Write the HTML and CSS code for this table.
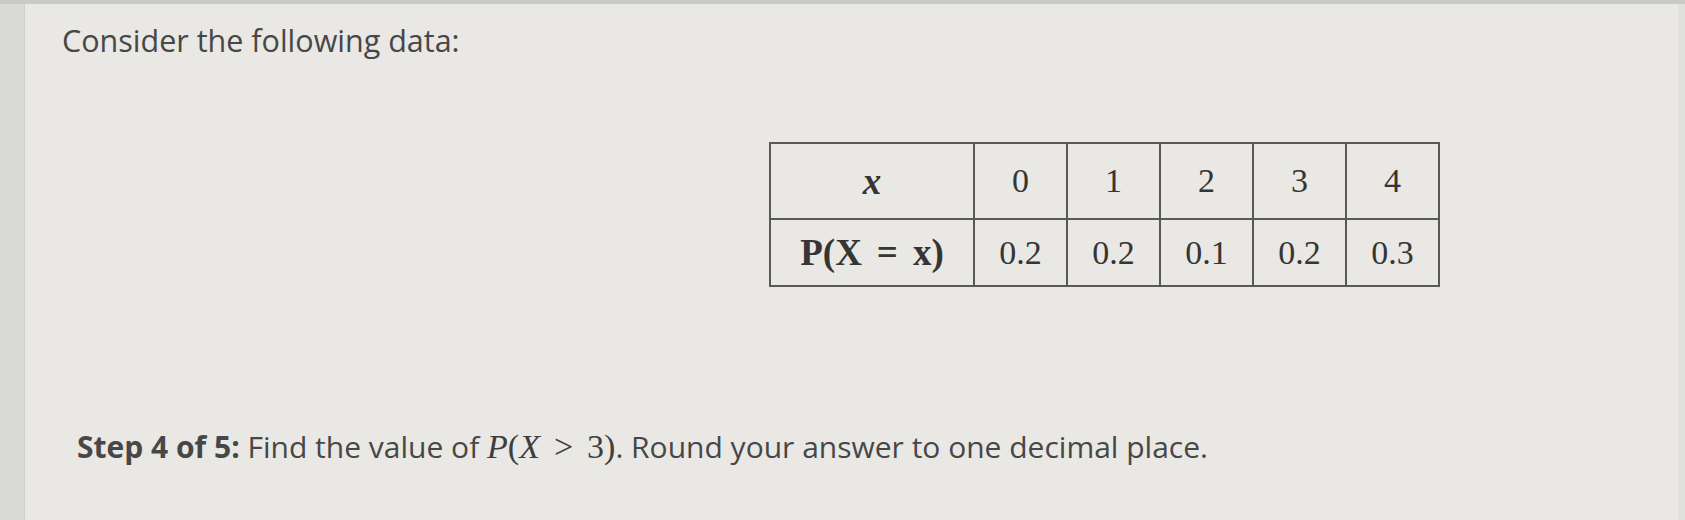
FILE: index.html
```html
<!DOCTYPE html>
<html lang="en">
<head>
<meta charset="utf-8">
<title>Consider the following data</title>
<link rel="stylesheet" href="styles.css">
</head>
<body>
<div class="screen">
  <div class="topband"></div>
  <div class="body-row">
    <div class="leftstrip"></div>
    <main class="page">
      <p class="intro">Consider the following data:</p>
      <table class="dist">
        <tr class="r1">
          <td class="head"><i>x</i></td>
          <td>0</td><td>1</td><td>2</td><td>3</td><td>4</td>
        </tr>
        <tr class="r2">
          <td class="head">P(X<span class="eq">=</span>x)</td>
          <td>0.2</td><td>0.2</td><td>0.1</td><td>0.2</td><td>0.3</td>
        </tr>
      </table>
      <p class="step"><b>Step 4 of 5:</b> Find the value of <span class="math"><i>P</i>(<i>X</i><span class="rel">&gt;</span>3)</span>. Round your answer to one decimal place.</p>
    </main>
    <div class="rightstrip"></div>
  </div>
</div>
</body>
</html>
```

FILE: styles.css
```css
html, body {
  margin: 0;
  padding: 0;
  background: #e7e6e2;
}
.screen {
  width: 1685px;
  height: 520px;
  display: flex;
  flex-direction: column;
  overflow: hidden;
  background: #e9e8e4;
}
.topband {
  height: 4px;
  background: #c9c9c7;
  flex: none;
}
.body-row {
  flex: 1;
  display: flex;
}
.leftstrip {
  width: 25px;
  flex: none;
  background: #d9d9d7;
  border-right: 1px solid #d0d0ce;
  box-sizing: border-box;
}
.rightstrip {
  width: 7px;
  flex: none;
  background: #e0e0de;
}
.page {
  flex: 1;
  padding: 16px 0 0 37px;
  font-family: "Open Sans", "Liberation Sans", sans-serif;
  color: #474747;
}
.intro {
  margin: 0;
  font-size: 30.5px;
  line-height: 41px;
}
.dist {
  margin: 81px 0 0 707px;
  border-collapse: collapse;
  font-family: "Liberation Serif", "Times New Roman", serif;
  font-size: 34px;
  color: #353535;
}
.dist td {
  border: 2px solid #585858;
  text-align: center;
  padding: 0;
  width: 91px;
}
.dist td.head {
  width: 202px;
  font-weight: bold;
  font-size: 37px;
}
.dist .r1 td { height: 74px; }
.dist .r2 td { height: 65px; }
.eq {
  margin: 0 15px;
}
.step {
  margin: 139px 0 0 15px;
  font-size: 30px;
  line-height: 41px;
}
.step b {
  font-weight: bold;
}
.math {
  font-family: "Liberation Serif", "Times New Roman", serif;
  font-size: 34px;
  color: #3e3e3e;
}
.rel {
  margin: 0 14px;
}
```
